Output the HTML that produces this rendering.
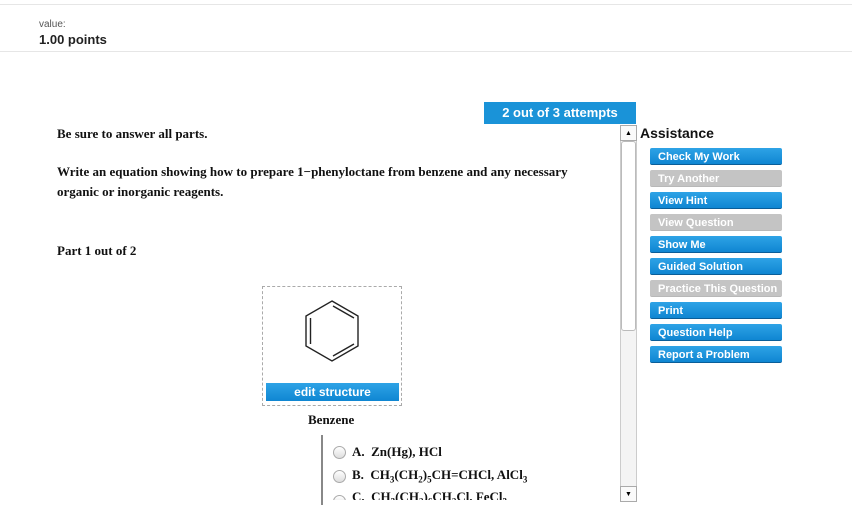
<!DOCTYPE html><html><head><style>
body{margin:0;width:852px;height:505px;overflow:hidden;background:#fff;position:relative;font-family:"Liberation Serif",serif}
.a{position:absolute}
.s{font-family:"Liberation Sans",sans-serif}
.t{font-weight:bold;font-size:13px;color:#111}
.btn{position:absolute;left:650px;width:132px;height:16px;border-radius:2px;font:bold 11px "Liberation Sans",sans-serif;color:#fff;line-height:18px;text-indent:8px;background:linear-gradient(#2ea3e6,#0f86d2);border-bottom:1px solid #0a5e99}
.g{background:#c4c4c4;border-bottom:1px solid #b8b8b8}
.r{position:absolute;left:333px;width:11px;height:11px;border-radius:50%;border:1px solid #aaa;background:linear-gradient(#fff,#ddd)}
sub{font-size:9px}
</style></head><body>
<div class="a" style="left:0;top:4px;width:852px;height:1px;background:#e6e6e6"></div>
<div class="a s" style="left:39px;top:19px;font-size:10px;color:#555">value:</div>
<div class="a s" style="left:39px;top:32px;font-size:13px;font-weight:bold;color:#222">1.00 points</div>
<div class="a" style="left:0;top:51px;width:852px;height:1px;background:#e6e6e6"></div>
<div class="a s" style="left:484px;top:102px;width:152px;height:22px;background:#1a93d8;color:#fff;font-weight:bold;font-size:13px;text-align:center;line-height:21px">2 out of 3 attempts</div>
<div class="a t" style="left:57px;top:126px">Be sure to answer all parts.</div>
<div class="a t" style="left:57px;top:162px;line-height:20px;width:550px">Write an equation showing how to prepare 1−phenyloctane from benzene and any necessary organic or inorganic reagents.</div>
<div class="a t" style="left:57px;top:243px">Part 1 out of 2</div>
<div class="a" style="left:262px;top:286px;width:138px;height:118px;border:1.5px dashed #aaa"></div>
<svg class="a" style="left:298px;top:298px" width="68" height="68" viewBox="0 0 68 68"><g stroke="#222" stroke-width="1.4" fill="none"><path d="M34 3 L60 18 L60 48 L34 63 L8 48 L8 18 Z"/><path d="M35 8 L56 20 M12.5 20 L12.5 46 M35 58 L56 46"/></g></svg>
<div class="a s" style="left:266px;top:383px;width:133px;height:18px;background:linear-gradient(#2ea3e6,#0f86d2);color:#fff;font-weight:bold;font-size:12px;text-align:center;line-height:18px">edit structure</div>
<div class="a t" style="left:308px;top:412px">Benzene</div>
<div class="a" style="left:321px;top:435px;width:2px;height:70px;background:#888"></div>
<div class="r" style="top:446px"></div><div class="a t" style="left:352px;top:444px">A.&nbsp; Zn(Hg), HCl</div>
<div class="r" style="top:470px"></div><div class="a t" style="left:352px;top:467px">B.&nbsp; CH<sub>3</sub>(CH<sub>2</sub>)<sub>5</sub>CH=CHCl, AlCl<sub>3</sub></div>
<div class="a" style="left:0;top:492px;width:620px;height:8px;overflow:hidden"><div class="r" style="top:3px"></div><div class="a t" style="left:352px;top:-3px">C.&nbsp; CH<sub>3</sub>(CH<sub>2</sub>)<sub>6</sub>CH<sub>2</sub>Cl, FeCl<sub>3</sub></div></div>
<div class="a" style="left:620px;top:125px;width:15px;height:375px;border:1px solid #ccc;background:#f4f4f4"></div>
<div class="a" style="left:621px;top:141px;width:13px;height:188px;border:1px solid #bbb;border-radius:3px;background:#fff"></div>
<div class="a" style="left:620px;top:125px;width:15px;height:14px;border:1px solid #aaa;background:#fafafa;font-size:7px;text-align:center;line-height:14px">▲</div>
<div class="a" style="left:620px;top:486px;width:15px;height:14px;border:1px solid #aaa;background:#fafafa;font-size:7px;text-align:center;line-height:14px">▼</div>
<div class="a s" style="left:640px;top:125px;font-size:14px;font-weight:bold;color:#111">Assistance</div>
<div class="btn" style="top:148px">Check My Work</div>
<div class="btn g" style="top:170px">Try Another</div>
<div class="btn" style="top:192px">View Hint</div>
<div class="btn g" style="top:214px">View Question</div>
<div class="btn" style="top:236px">Show Me</div>
<div class="btn" style="top:258px">Guided Solution</div>
<div class="btn g" style="top:280px">Practice This Question</div>
<div class="btn" style="top:302px">Print</div>
<div class="btn" style="top:324px">Question Help</div>
<div class="btn" style="top:346px">Report a Problem</div>
</body></html>
